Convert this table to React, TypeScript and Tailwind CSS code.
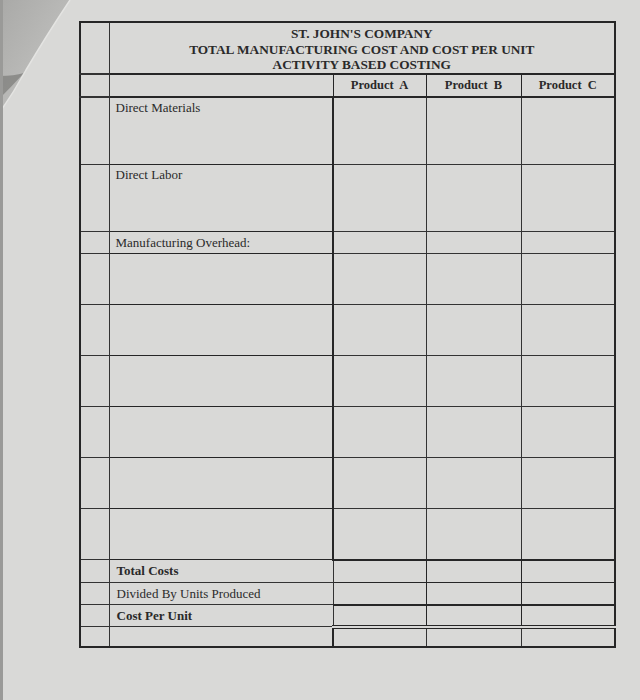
import React from 'react';

const serif = { fontFamily: '"Liberation Serif", "Times New Roman", serif' };

const blankRows = [0, 1, 2, 3, 4, 5];

const App: React.FC = () => {
  return (
    <div className="relative w-[640px] h-[700px] overflow-hidden bg-[#d9d9d7]" style={serif}>
      {/* page curl in the corner */}
      <svg className="absolute left-0 top-0" width="80" height="130" viewBox="0 0 80 130">
        <defs>
          <linearGradient id="curl" x1="0" y1="0" x2="1" y2="1">
            <stop offset="0" stopColor="#a9a9a7" />
            <stop offset="1" stopColor="#c9c9c7" />
          </linearGradient>
        </defs>
        <path d="M0 0 L70 0 Q46 36 26 70 Q14 92 0 112 Z" fill="url(#curl)" />
        <path d="M0 76 Q14 76 24 73 Q12 86 0 98 Z" fill="#7a7a78" opacity="0.7" />
        <path d="M70 0 Q46 36 26 70 Q14 92 0 112" fill="none" stroke="#e4e4e2" strokeWidth="1.5" />
      </svg>
      <div className="absolute left-0 top-0 w-[3px] h-full bg-[#9a9a98]" />

      <div className="pt-[21px] pl-[79px]">
        <table className="table-fixed border-collapse w-[535px] border-[2.5px] border-[#262626] text-[#2a2a2a]">
          <colgroup>
            <col className="w-[29px]" />
            <col className="w-[224px]" />
            <col className="w-[93px]" />
            <col className="w-[95px]" />
            <col className="w-[94px]" />
          </colgroup>
          <tbody>
            <tr className="h-[42px]">
              <td className="border-r border-b-2 border-[#333]" />
              <td colSpan={4} className="border-b-2 border-[#262626] text-center font-bold text-[13.3px] leading-[15.5px] pt-[3px] uppercase">
                <div>St. John's Company</div>
                <div>Total Manufacturing Cost and Cost Per Unit</div>
                <div>Activity Based Costing</div>
              </td>
            </tr>
            <tr className="h-[23px] text-[12.5px] font-bold">
              <td className="border-r border-b-2 border-[#333]" />
              <td className="border-r border-b-2 border-[#262626]" />
              <td className="border-r border-b-2 border-[#262626] text-center">Product&nbsp; A</td>
              <td className="border-r border-b-2 border-[#262626] text-center">Product&nbsp; B</td>
              <td className="border-b-2 border-[#262626] text-center">Product&nbsp; C</td>
            </tr>
            <Row h="h-[68px]" label="Direct Materials" />
            <Row h="h-[67px]" label="Direct Labor" />
            <Row h="h-[22px]" label="Manufacturing Overhead:" middle />
            {blankRows.map((i) => (
              <Row key={i} h="h-[51px]" label="" />
            ))}
            <tr className="h-[23px] text-[13px]">
              <td className="border-r border-t border-b border-[#333]" />
              <td className="border-r border-b border-t border-[#333] pl-[7px] font-bold">Total Costs</td>
              <td className="border-r border-b border-t-2 border-[#262626]" />
              <td className="border-r border-b border-t-2 border-[#262626]" />
              <td className="border-b border-t-2 border-[#262626]" />
            </tr>
            <tr className="h-[22px] text-[13px]">
              <td className="border-r border-b border-[#333]" />
              <td className="border-r border-b border-[#333] pl-[7px]">Divided By Units Produced</td>
              <td className="border-r border-b-2 border-[#262626]" />
              <td className="border-r border-b-2 border-[#262626]" />
              <td className="border-b-2 border-[#262626]" />
            </tr>
            <tr className="h-[22px] text-[13px]">
              <td className="border-r border-b border-[#333]" />
              <td className="border-r border-b border-[#333] pl-[7px] font-bold">Cost Per Unit</td>
              <td className="border-r border-b-4 border-double border-[#262626]" />
              <td className="border-r border-b-4 border-double border-[#262626]" />
              <td className="border-b-4 border-double border-[#262626]" />
            </tr>
            <tr className="h-[20px]">
              <td className="border-r border-[#333]" />
              <td className="border-r-2 border-[#262626]" />
              <td className="border-r border-[#333]" />
              <td className="border-r border-[#333]" />
              <td />
            </tr>
          </tbody>
        </table>
      </div>
    </div>
  );
};

interface RowProps {
  h: string;
  label: string;
  middle?: boolean;
}

const Row: React.FC<RowProps> = ({ h, label, middle }) => {
  return (
    <tr className={`${h} text-[13px]`}>
      <td className="border-r border-b border-[#333]" />
      <td className={`border-r-2 border-b border-[#262626] pl-[6px] ${middle ? 'align-middle' : 'align-top'}`}>
        {label}
      </td>
      <td className="border-r border-b border-[#333]" />
      <td className="border-r border-b border-[#333]" />
      <td className="border-b border-[#333]" />
    </tr>
  );
};

export default App;
